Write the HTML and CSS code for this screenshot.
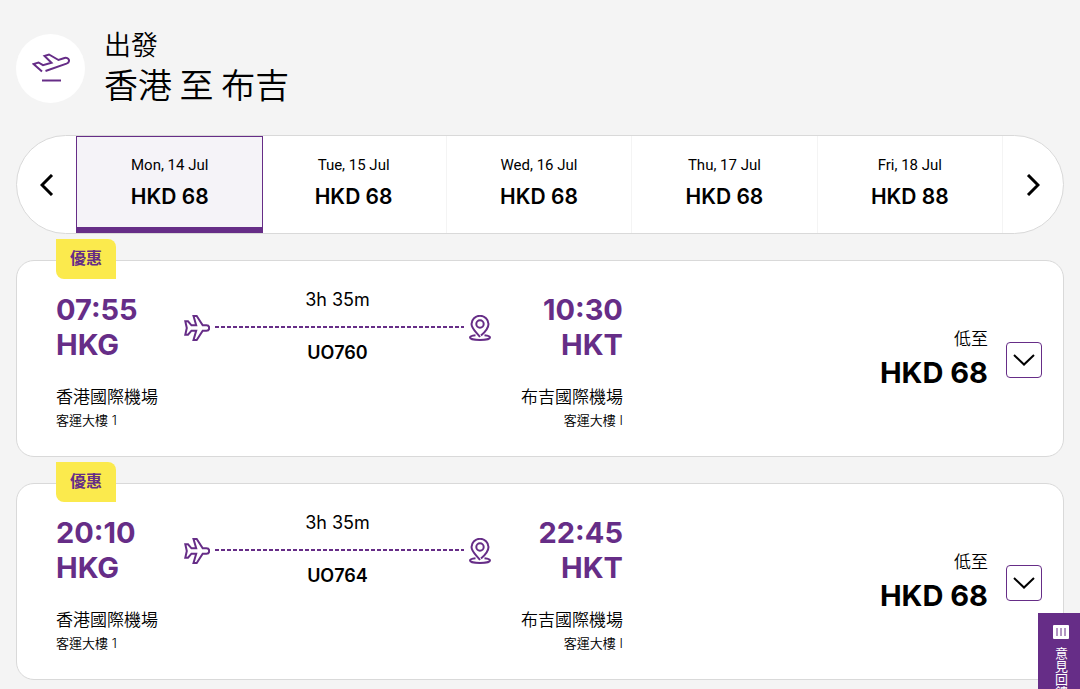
FILE: index.html
```
<!DOCTYPE html>
<html lang="zh-Hant">
<head>
  <meta charset="UTF-8">
  <meta name="viewport" content="width=device-width, initial-scale=1.0">
  <title>香港 至 布吉</title>
  <link rel="stylesheet" href="styles.css">
</head>
<body>

  <!-- shared icons -->
  <svg class="sprite" aria-hidden="true">
    <symbol id="plane" viewBox="0 0 26 26">
      <path d="M9.500 1h3.200l6 9.300h3.800c1.600 0 2.700 1.200 2.700 2.700s-1.100 2.700-2.700 2.700h-3.800l-6 9.300H9.500l2.700-9.300H7.500L4 19.700H1.300L2.800 13 1.300 6.300H4l3.500 4h4.700z"/>
    </symbol>
    <symbol id="pin" viewBox="0 0 22 26">
      <path d="M11 22C7 17 2.500 13.500 2.500 9a8.500 8.200 0 0 1 17 0c0 4.500-4 8.500-7.500 11.500"/>
      <circle cx="11" cy="9" r="3.700"/>
      <path d="M6.500 20.300C3.500 20.700 1 21.500 1 22.500 1 24 5.500 25 11 25s10-1 10-2.500c0-1-2.500-1.800-5.500-2.200"/>
    </symbol>
    <symbol id="chevron" viewBox="0 0 24 14">
      <path d="M2 2l10 9.500L22 2"/>
    </symbol>
  </svg>

  <main class="page">
    <header class="heading">
      <span class="heading-icon">
        <svg width="38" height="30" viewBox="0 0 38 30" aria-hidden="true">
          <path d="M10 18.500L1.500 11l5-1.500 4.500 2.700 8.500-2.400L12.500 3l4.500-1.500L26.500 7l6-2c2-.6 3.900.2 4.400 1.900.4 1.600-.6 3-2.400 3.700L13.500 18"/>
          <path d="M10 27.500h19"/>
        </svg>
      </span>
      <h1 class="heading-text">
        <span class="heading-label">出發</span>
        <span class="heading-route">香港 至 布吉</span>
      </h1>
    </header>

    <nav class="dates">
      <button class="arrow" aria-label="上一頁">
        <svg width="14" height="22" viewBox="0 0 14 22"><path d="M12 1L2 11l10 10"/></svg>
      </button>
      <button class="date active">
        <span>Mon, 14 Jul</span>
        <strong>HKD 68</strong>
      </button>
      <button class="date">
        <span>Tue, 15 Jul</span>
        <strong>HKD 68</strong>
      </button>
      <button class="date">
        <span>Wed, 16 Jul</span>
        <strong>HKD 68</strong>
      </button>
      <button class="date">
        <span>Thu, 17 Jul</span>
        <strong>HKD 68</strong>
      </button>
      <button class="date">
        <span>Fri, 18 Jul</span>
        <strong>HKD 88</strong>
      </button>
      <button class="arrow" aria-label="下一頁">
        <svg width="14" height="22" viewBox="0 0 14 22"><path d="M2 1l10 10L2 21"/></svg>
      </button>
    </nav>

    <section class="flights">
      <article class="flight">
        <span class="badge">優惠</span>
        <div class="journey">
          <div class="stop">
            <div class="time">07:55</div>
            <div class="time">HKG</div>
            <div class="airport">香港國際機場</div>
            <div class="terminal">客運大樓 1</div>
          </div>
          <div class="route">
            <div class="duration">3h 35m</div>
            <div class="track">
              <svg class="icon" width="26" height="26"><use href="#plane"/></svg>
              <span class="dashes"></span>
              <svg class="icon" width="22" height="26"><use href="#pin"/></svg>
            </div>
            <div class="number">UO760</div>
          </div>
          <div class="stop arrival">
            <div class="time">10:30</div>
            <div class="time">HKT</div>
            <div class="airport">布吉國際機場</div>
            <div class="terminal">客運大樓 I</div>
          </div>
        </div>
        <div class="fare">
          <div class="fare-text">
            <div class="from">低至</div>
            <div class="price">HKD 68</div>
          </div>
          <button class="expand" aria-label="展開">
            <svg width="24" height="14"><use href="#chevron"/></svg>
          </button>
        </div>
      </article>

      <article class="flight">
        <span class="badge">優惠</span>
        <div class="journey">
          <div class="stop">
            <div class="time">20:10</div>
            <div class="time">HKG</div>
            <div class="airport">香港國際機場</div>
            <div class="terminal">客運大樓 1</div>
          </div>
          <div class="route">
            <div class="duration">3h 35m</div>
            <div class="track">
              <svg class="icon" width="26" height="26"><use href="#plane"/></svg>
              <span class="dashes"></span>
              <svg class="icon" width="22" height="26"><use href="#pin"/></svg>
            </div>
            <div class="number">UO764</div>
          </div>
          <div class="stop arrival">
            <div class="time">22:45</div>
            <div class="time">HKT</div>
            <div class="airport">布吉國際機場</div>
            <div class="terminal">客運大樓 I</div>
          </div>
        </div>
        <div class="fare">
          <div class="fare-text">
            <div class="from">低至</div>
            <div class="price">HKD 68</div>
          </div>
          <button class="expand" aria-label="展開">
            <svg width="24" height="14"><use href="#chevron"/></svg>
          </button>
        </div>
      </article>
    </section>
  </main>

  <button class="feedback">
    <svg width="16" height="14" viewBox="0 0 16 14" aria-hidden="true">
      <rect width="16" height="14" rx="1" fill="#fff"/>
      <path d="M4 3v8M8 3v8M12 3v8" stroke="#662d87"/>
    </svg>
    <span>意見回饋</span>
  </button>

</body>
</html>
```
FILE: styles.css
```
* {
  box-sizing: border-box;
}

body {
  margin: 0;
  background-color: #f4f4f4;
  color: #000;
  font-family: Inter, "Noto Sans CJK TC", sans-serif;
}

button {
  margin: 0;
  padding: 0;
  border: none;
  background: none;
  color: inherit;
  font-family: inherit;
  cursor: pointer;
}

svg {
  display: block;
  fill: none;
}

.sprite {
  position: absolute;
  width: 0;
  height: 0;
}

.page {
  padding: 26px 16px 0;
}

/* heading */
.heading {
  display: flex;
  align-items: center;
  gap: 19px;
  margin-bottom: 25px;
}

.heading-icon {
  display: flex;
  align-items: center;
  justify-content: center;
  width: 69px;
  height: 69px;
  border-radius: 50%;
  background-color: #fff;
  stroke: #662d87;
  stroke-width: 2;
}

.heading-text {
  display: flex;
  flex-direction: column;
  margin: 0;
  font-family: "Noto Sans CJK TC", sans-serif;
  font-weight: 350;
}

.heading-label {
  font-size: 27px;
  line-height: 36px;
}

.heading-route {
  margin-bottom: 4px;
  font-size: 34px;
  line-height: 44px;
}

/* date tabs */
.dates {
  display: grid;
  grid-template-columns: 59px repeat(5, 1fr) 60px;
  height: 99px;
  margin-bottom: 26px;
  border: 1px solid #d9d9d9;
  border-radius: 50px;
  background-color: #fff;
  overflow: hidden;
}

.arrow {
  display: flex;
  align-items: center;
  justify-content: center;
  stroke: #000;
  stroke-width: 3;
}

.date {
  display: flex;
  flex-direction: column;
  align-items: center;
  padding-top: 17px;
  border-right: 1px solid #f4f4f4;
}

.date span {
  font-family: Roboto, sans-serif;
  font-size: 15px;
  line-height: 24px;
}

.date strong {
  margin-top: 5px;
  font-size: 21px;
  font-weight: 600;
  line-height: 30px;
}

.date.active {
  margin-right: -2px;
  padding-top: 16px;
  border: 1px solid #662d87;
  border-bottom-width: 6px;
  background-color: #f5f3f8;
}

/* flight cards */
.flights {
  display: flex;
  flex-direction: column;
  gap: 26px;
  padding-bottom: 26px;
}

.flight {
  position: relative;
  display: flex;
  justify-content: space-between;
  padding: 27px 21px 25px 39px;
  border: 1px solid #d9d9d9;
  border-radius: 18px;
  background-color: #fff;
}

.badge {
  position: absolute;
  top: -22px;
  left: 39px;
  width: 60px;
  height: 40px;
  border-radius: 0 8px 0 8px;
  background-color: #fbea4d;
  color: #662d87;
  font-size: 16px;
  font-weight: 700;
  line-height: 38px;
  text-align: center;
}

.journey {
  display: grid;
  grid-template-columns: 128px 1fr 132px;
  width: 57.5%;
}

.stop {
  padding-top: 4px;
}

.arrival {
  text-align: right;
}

.time {
  color: #662d87;
  font-size: 29px;
  font-weight: 700;
  line-height: 35px;
}

.airport {
  margin-top: 23px;
  font-size: 17px;
  font-weight: 350;
  line-height: 24px;
}

.terminal {
  font-size: 13px;
  font-weight: 350;
  line-height: 22px;
}

.route {
  text-align: center;
}

.duration,
.number {
  font-size: 18px;
  line-height: 24px;
}

.number {
  font-weight: 600;
}

.track {
  display: flex;
  align-items: center;
  gap: 5px;
  margin-top: 3px;
}

.icon {
  stroke: #662d87;
  stroke-width: 2;
}

.dashes {
  flex: 1;
  height: 2px;
  margin-bottom: 2px;
  background: repeating-linear-gradient(to right, #662d87 0 4px, transparent 4px 6px);
}

.fare {
  display: flex;
  align-items: center;
  gap: 18px;
}

.fare-text {
  padding-bottom: 2px;
  text-align: right;
}

.from {
  font-size: 17px;
  font-weight: 350;
  line-height: 28px;
}

.price {
  font-size: 29px;
  font-weight: 700;
  line-height: 40px;
}

.expand {
  display: flex;
  align-items: center;
  justify-content: center;
  width: 36px;
  height: 36px;
  border: 1px solid #662d87;
  border-radius: 4px;
  stroke: #000;
  stroke-width: 2;
}

/* feedback tab runs past the bottom of the window */
.feedback {
  position: fixed;
  top: 613px;
  right: 0;
  display: flex;
  flex-direction: column;
  align-items: center;
  gap: 8px;
  width: 42px;
  padding: 12px 0 12px 3px;
  background-color: #662d87;
  color: #fff;
}

.feedback span {
  font-size: 13px;
  line-height: 13px;
  writing-mode: vertical-rl;
}
```
